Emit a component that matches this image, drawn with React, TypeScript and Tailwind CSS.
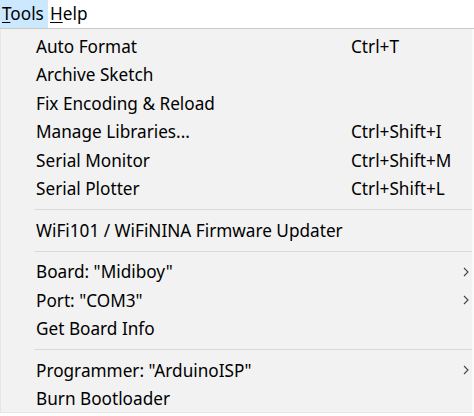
import React from "react";

type Item = { label: string; shortcut?: string; sub?: boolean } | "sep";

const items: Item[] = [
  { label: "Auto Format", shortcut: "Ctrl+T" },
  { label: "Archive Sketch" },
  { label: "Fix Encoding & Reload" },
  { label: "Manage Libraries...", shortcut: "Ctrl+Shift+I" },
  { label: "Serial Monitor", shortcut: "Ctrl+Shift+M" },
  { label: "Serial Plotter", shortcut: "Ctrl+Shift+L" },
  "sep",
  { label: "WiFi101 / WiFiNINA Firmware Updater" },
  "sep",
  { label: 'Board: "Midiboy"', sub: true },
  { label: 'Port: "COM3"', sub: true },
  { label: "Get Board Info" },
  "sep",
  { label: 'Programmer: "ArduinoISP"', sub: true },
  { label: "Burn Bootloader" },
];

function Chevron() {
  return (
    <svg width="6" height="10" viewBox="0 0 6 10" className="absolute left-[462px] top-1/2 -translate-y-1/2">
      <path d="M1 1 L5 5 L1 9" fill="none" stroke="#444" strokeWidth="1.1" />
    </svg>
  );
}

export default function App() {
  return (
    <div
      className="w-[474px] h-[416px] bg-white overflow-hidden text-[17.2px] text-black"
      style={{ fontFamily: '"Noto Sans", "Open Sans", sans-serif' }}
    >
      <div className="h-[29px] flex items-stretch border-b border-[#c9c9c9] bg-white">
        <div className="w-[48px] h-[28px] bg-[#cce8ff] pl-[2px] flex items-center leading-none">
          <span><span className="underline underline-offset-[2px] decoration-1">T</span>ools</span>
        </div>
        <div className="pl-[2px] h-[28px] flex items-center leading-none">
          <span><span className="underline underline-offset-[2px] decoration-1">H</span>elp</span>
        </div>
      </div>
      <div className="h-[384px] bg-[#f2f2f2] pt-[3px] border-l border-[#e6e6e6] border-r-2 border-r-[#fafafa] border-b border-b-[#e6e6e6]">
        {items.map((it, i) =>
          it === "sep" ? (
            <div key={i} className="h-[13px] flex items-center pl-[33px]">
              <div className="h-px w-full bg-[#d9d9d9]" />
            </div>
          ) : (
            <div key={i} className="relative h-[28.5px] flex items-center leading-none">
              <span className="absolute left-[35px]">{it.label}</span>
              {it.shortcut && <span className="absolute left-[350px]">{it.shortcut}</span>}
              {it.sub && <Chevron />}
            </div>
          )
        )}
      </div>
    </div>
  );
}
